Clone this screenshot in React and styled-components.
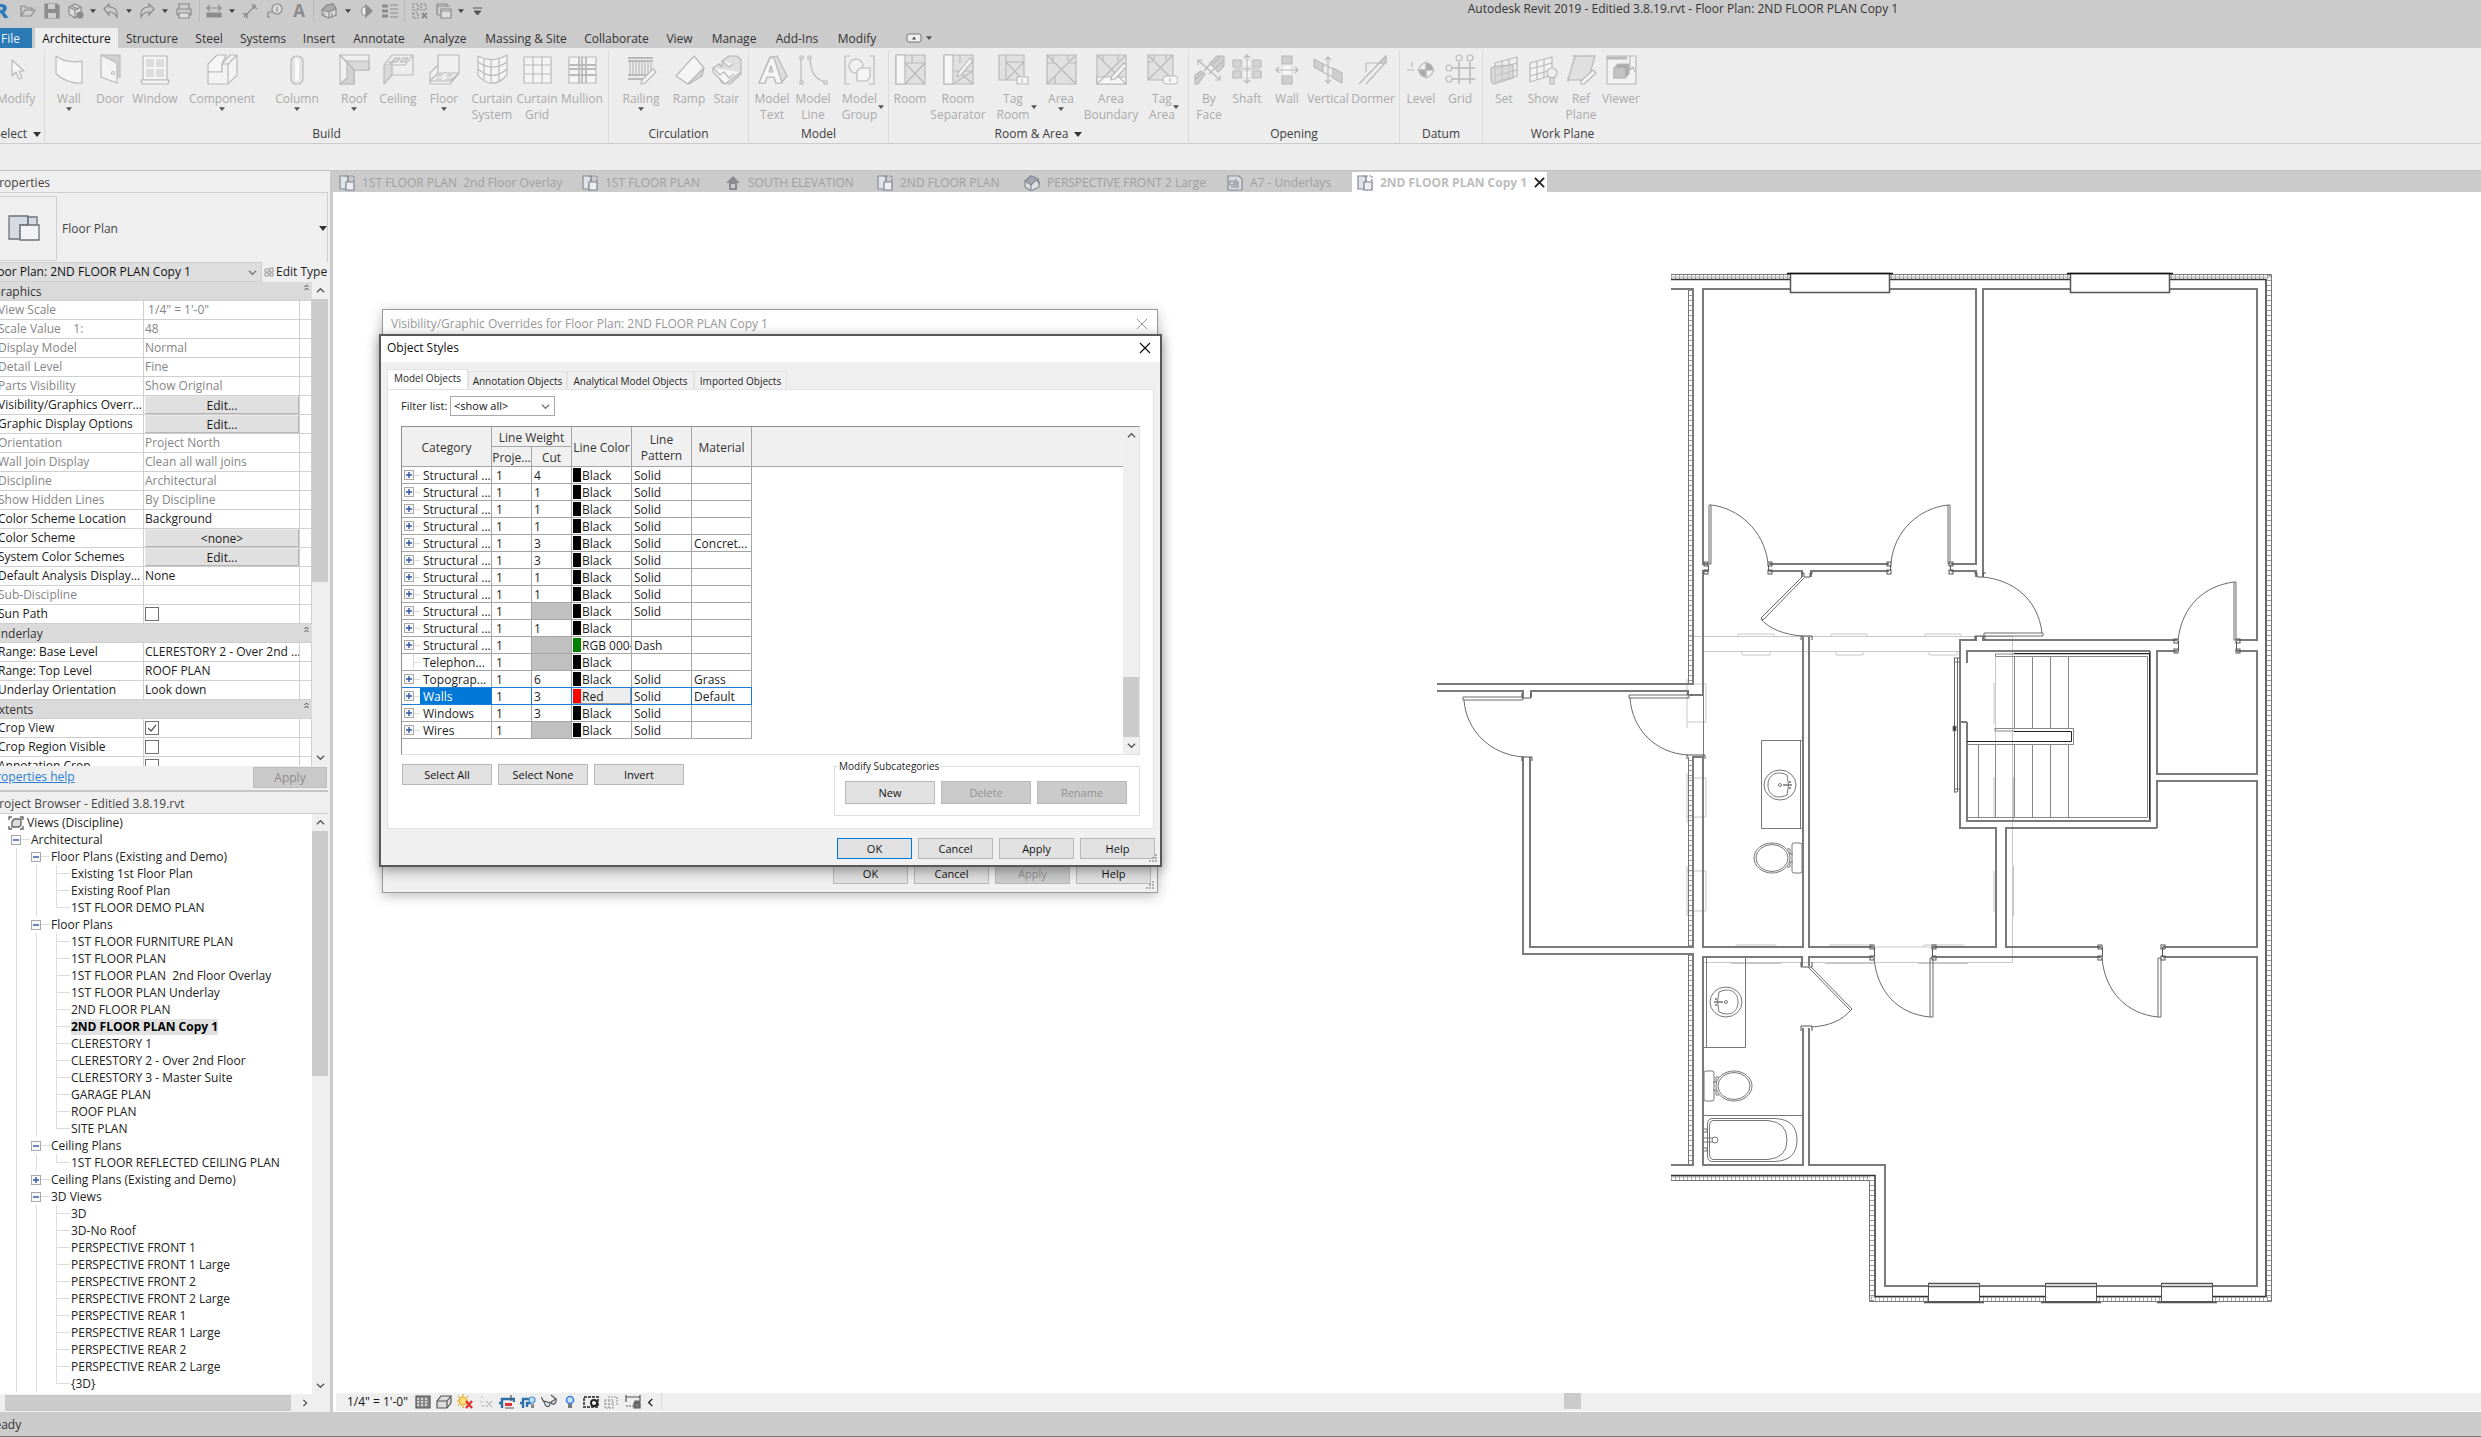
import React, { useState } from "react";
import styled, { createGlobalStyle } from "styled-components";

const GlobalStyle = createGlobalStyle`
  * { box-sizing: border-box; }
  body {
    margin: 0;
    overflow: hidden;
    font-family: "Open Sans", "Noto Sans", sans-serif;
    font-size: 12px;
    line-height: 16px;
    color: #1e1e1e;
    background: #ededed;
  }
  button, input, select { font: inherit; color: inherit; }
  svg { display: block; flex: none; }
`;

/* The left edge of the window runs off the screen */
const Shell = styled.div`
  display: flex;
  flex-direction: column;
  height: 100vh;
  margin-left: -14px;
  overflow: hidden;
`;

const TitleBar = styled.header`
  display: flex;
  align-items: flex-start;
  height: 28px;
  background: #cbcbcb;
`;

const QuickAccess = styled.div`
  display: flex;
  align-items: center;
  height: 22px;
`;

const Logo = styled.span`
  width: 22px;
  margin-right: 8px;
  text-align: right;
  font-size: 20px;
  font-weight: 800;
  color: #2f78b8;
`;

const QuickButton = styled.button`
  display: flex;
  justify-content: center;
  width: ${({ $w }) => $w}px;
  padding: 0;
  border: none;
  background: none;
  color: #8b8b8b;
  b { font-size: 17px; }
`;

const QuickDivider = styled.span`
  width: 1px;
  height: 22px;
  margin: 0 2px;
  background: #b9b9b9;
`;

const Title = styled.h1`
  flex: 1;
  margin: 0;
  padding: 1px 0 0 398px;
  text-align: center;
  font-size: 12px;
  font-weight: 400;
  color: #333;
`;

const RibbonTabs = styled.nav`
  display: flex;
  height: 20px;
  background: #cbcbcb;
  font-size: 12px;
`;

const FileTab = styled.button`
  width: 46px;
  margin-right: 3px;
  padding: 2px 0 0 15px;
  border: none;
  text-align: left;
  background: #2a7ab5;
  color: #e8f2fa;
`;

const RibbonTab = styled.button`
  width: ${({ $w }) => $w}px;
  padding: 2px 0 0;
  border: none;
  white-space: nowrap;
  background: ${({ $active }) => ($active ? "#ededed" : "transparent")};
  color: ${({ $active }) => ($active ? "#111" : "#333")};
`;

const RibbonToggle = styled.button`
  display: flex;
  align-items: center;
  gap: 4px;
  margin-left: 20px;
  padding: 0;
  border: none;
  background: none;
  color: #444;
`;

const Ribbon = styled.section`
  display: flex;
  height: 96px;
  padding-top: 2px;
  border-bottom: 1px solid #cbcbcb;
  background: #ededed;
`;

const Group = styled.div`
  display: flex;
  flex-direction: column;
  justify-content: space-between;
  width: ${({ $w }) => $w}px;
  border-right: 1px solid ${({ $last }) => ($last ? "transparent" : "#dadada")};
`;

const Tools = styled.div`
  display: flex;
  align-items: flex-start;
  padding-top: 4px;
`;

const Tool = styled.button`
  display: flex;
  flex: none;
  flex-direction: column;
  align-items: center;
  position: relative;
  width: ${({ $w }) => $w}px;
  padding: 0;
  border: none;
  background: none;
  color: #aaa;
  white-space: nowrap;
  line-height: 16px;
`;

const ToolLabel = styled.span`
  margin-top: 6px;
  text-align: center;
`;

const SideArrow = styled.span`
  position: absolute;
  right: 4px;
  bottom: 14px;
`;

const GroupLabel = styled.div`
  display: flex;
  align-items: center;
  justify-content: ${({ $start }) => ($start ? "flex-start" : "center")};
  gap: 6px;
  height: 18px;
  padding-left: ${({ $start }) => ($start ? 8 : 0)}px;
  color: #3c3c3c;
`;

const OptionsBar = styled.div`
  height: 27px;
  border-bottom: 1px solid #c3c3c3;
  background: #ededed;
`;

const Workspace = styled.div`
  display: flex;
  flex: 1;
  min-height: 0;
`;

const Sidebar = styled.aside`
  display: flex;
  flex-direction: column;
  width: 347px;
  border-right: 3px solid #cbcbcb;
  padding-right: 2px;
  background: #efefef;
`;

const PanelTitle = styled.h2`
  height: 22px;
  margin: 0;
  padding: 4px 0 0 6px;
  border-bottom: 1px solid #cfcfcf;
  font-size: 12px;
  font-weight: 400;
  color: #444;
`;

const TypeSelector = styled.button`
  display: flex;
  align-items: center;
  width: 100%;
  height: 69px;
  padding: 4px 0 2px;
  border: none;
  border-right: 1px solid #cfcfcf;
  background: none;
  color: #444;
  text-align: left;
`;

const Thumb = styled.span`
  display: flex;
  align-items: center;
  width: 71px;
  height: 65px;
  margin-right: 5px;
  padding-left: 21px;
  border: 1px solid #d0d0d0;
`;

const Grow = styled.span`
  flex: 1;
`;

const InstanceRow = styled.div`
  display: flex;
  height: 20px;
`;

const SelectWrap = styled.span`
  position: relative;
  display: block;
  width: ${({ $w }) => $w}px;
  color: #111;
  svg {
    position: absolute;
    right: 5px;
    top: 6px;
    color: #777;
    pointer-events: none;
  }
`;

const Select = styled.select`
  width: 100%;
  height: 20px;
  padding: 0 0 0 ${({ $pad }) => $pad}px;
  border: 1px solid ${({ $edge }) => $edge};
  border-radius: 0;
  appearance: none;
  background: ${({ $bg }) => $bg};
`;

const EditType = styled.button`
  display: flex;
  align-items: center;
  gap: 2px;
  flex: 1;
  padding: 0 0 0 2px;
  border: none;
  background: none;
  white-space: nowrap;
`;

const PropertyArea = styled.div`
  display: flex;
  height: 484px;
`;

const PropertyClip = styled.div`
  flex: 1;
  overflow: hidden;
  background: #fff;
`;

const PropertyTable = styled.table`
  width: 100%;
  table-layout: fixed;
  border-spacing: 0;
  td, th {
    height: 19px;
    padding: 1px 0 0 1px;
    border-right: 1px solid #cfcfcf;
    border-bottom: 1px solid #cfcfcf;
    font-weight: 400;
    text-align: left;
    white-space: pre;
    overflow: hidden;
  }
  td { padding-top: 0; }
  td:first-child { padding-left: 12px; text-overflow: ellipsis; }
  th {
    position: relative;
    padding-left: 6px;
    background: #dadada;
    color: #333;
    border-right: none;
  }
  th svg { position: absolute; right: 3px; top: 2px; }
`;

const Col = styled.col`
  width: ${({ $w }) => $w}px;
`;

const PropertyRow = styled.tr`
  color: ${({ $dim }) => ($dim ? "#858585" : "#1a1a1a")};
`;

const CellButton = styled.button`
  display: block;
  width: 100%;
  height: 18px;
  padding: 1px 0 0;
  border: 1px solid #b4b4b4;
  border-top-color: #e8e8e8;
  border-left-color: #e8e8e8;
  background: #e0e0e0;
  line-height: 15px;
`;

const CheckBox = styled.input`
  display: block;
  appearance: none;
  width: 14px;
  height: 14px;
  margin: 0;
  border: 1px solid #707070;
  background: #fff;
`;

const CheckHolder = styled.span`
  position: relative;
  display: block;
  width: 14px;
  svg { position: absolute; left: 2px; top: 3px; pointer-events: none; }
`;

const PropertiesFooter = styled.div`
  display: flex;
  justify-content: space-between;
  height: 26px;
  padding: 1px 1px 3px 3px;
  border-bottom: 2px solid #c6c6c6;
  a { padding-top: 2px; color: #2a7fd0; }
`;

const FooterApply = styled.button`
  width: 74px;
  height: 21px;
  padding: 0;
  border: 1px solid #bdbdbd;
  background: #c9c9c9;
  color: #8c8c8c;
`;

const BarTrack = styled.div`
  display: flex;
  flex-direction: column;
  justify-content: space-between;
  flex: none;
  width: 16px;
  background: #efefef;
  color: #555;
  button {
    display: flex;
    justify-content: center;
    align-items: center;
    width: 16px;
    height: 17px;
    padding: 0;
    border: none;
    background: none;
    color: inherit;
  }
`;

const BarThumb = styled.div`
  height: ${({ $h }) => $h}px;
  margin-bottom: ${({ $below }) => ($below ? "0" : "auto")};
  margin-top: ${({ $below }) => ($below ? "auto" : "0")};
  background: #cbcbcb;
`;

const BrowserArea = styled.div`
  display: flex;
  flex: 1;
  min-height: 0;
`;

const Tree = styled.ul`
  flex: 1;
  margin: 0;
  padding: 0;
  overflow: hidden;
  list-style: none;
  background: #fff;
`;

const TreeRow = styled.li`
  display: flex;
  align-items: center;
  height: 17px;
  white-space: pre;
  color: #222;
`;

const Guide = styled.span`
  width: ${({ $narrow }) => ($narrow ? 11 : 20)}px;
  height: ${({ $half }) => ($half ? 9 : 17)}px;
  align-self: flex-start;
  background: ${({ $blank }) => ($blank ? "none" : "linear-gradient(#dcdcdc, #dcdcdc) 10px 0 / 1px 100% no-repeat")};
`;

const Dash = styled.span`
  flex: none;
  width: ${({ $w }) => $w}px;
  height: 1px;
  margin-left: ${({ $back }) => -$back}px;
  background: #dcdcdc;
`;

const Toggle = styled.button`
  display: flex;
  flex: none;
  align-items: center;
  justify-content: center;
  width: 10px;
  height: 10px;
  margin: 0 5px;
  padding: 0;
  border: 1px solid #a9a9a9;
  background: #f8f8f8;
  color: #3355a8;
`;

const TreeText = styled.span`
  margin-left: 1px;
  background: ${({ $active }) => ($active ? "#e2e2e2" : "none")};
  color: ${({ $active }) => ($active ? "#000" : "inherit")};
  font-weight: ${({ $active }) => ($active ? 700 : 400)};
`;

const BottomScroll = styled.div`
  display: flex;
  align-items: center;
  height: 17px;
  margin-bottom: 1px;
  padding-left: 19px;
  color: #444;
`;

const BottomThumb = styled.div`
  width: 286px;
  height: 16px;
  margin-right: 10px;
  background: #cbcbcb;
`;

const Editor = styled.main`
  display: flex;
  flex-direction: column;
  flex: 1;
  min-width: 0;
  background: #fff;
`;

const DocTabs = styled.nav`
  display: flex;
  height: 21px;
  padding: 1px 0 0 1px;
  background: #cbcbcb;
`;

const DocTab = styled.button`
  display: flex;
  align-items: center;
  gap: 7px;
  width: ${({ $w }) => $w}px;
  padding: 1px 5px 0;
  border: none;
  white-space: pre;
  background: ${({ $active }) => ($active ? "#fff" : "transparent")};
  color: ${({ $active }) => ($active ? "#bdbdbd" : "#a0a0a0")};
  font-weight: ${({ $active }) => ($active ? 700 : 400)};
`;

const CloseMark = styled.span`
  color: #222;
`;

const Canvas = styled.div`
  position: relative;
  display: flex;
  justify-content: flex-end;
  flex: 1;
  min-height: 0;
  padding: 68px 191px 0 0;
`;

const ViewBar = styled.footer`
  display: flex;
  align-items: center;
  height: 18px;
  margin: 0 0 1px 3px;
  padding-left: 11px;
  background: #efefef;
  color: #111;
`;

const ViewScale = styled.span`
  width: 68px;
  white-space: nowrap;
`;

const ViewButton = styled.button`
  display: flex;
  width: 21px;
  padding: 0;
  border: none;
  background: none;
`;

const HTrack = styled.div`
  flex: 1;
  height: 18px;
  margin-left: 6px;
  padding-left: 42%;
  border-left: 1px solid #ddd;
`;

const HThumb = styled.div`
  width: 17px;
  height: 16px;
  margin-left: 6px;
  background: #cbcbcb;
`;

const StatusBar = styled.footer`
  height: 25px;
  padding: 5px 0 0 1px;
  border-bottom: 1px solid #777;
  background: #cbcbcb;
  color: #333;
`;

const DialogBox = styled.div`
  position: absolute;
  display: flex;
  flex-direction: column;
  left: ${({ $front }) => ($front ? 46 : 49)}px;
  top: ${({ $front }) => ($front ? 142 : 117)}px;
  width: ${({ $front }) => ($front ? 783 : 776)}px;
  height: ${({ $front }) => ($front ? 533 : 584)}px;
  border: ${({ $front }) => ($front ? "2px solid #585858" : "1px solid #999")};
  background: #f0f0f0;
  box-shadow: 0 3px 12px rgba(0, 0, 0, ${({ $front }) => ($front ? 0.4 : 0.25)});
`;

const DialogTitle = styled.div`
  display: flex;
  align-items: center;
  justify-content: space-between;
  height: ${({ $dim }) => ($dim ? 28 : 26)}px;
  padding: 0 9px ${({ $dim }) => ($dim ? "0 8px" : "2px 6px")};
  background: #fff;
  color: ${({ $dim }) => ($dim ? "#999" : "#111")};
  button {
    padding: 0;
    border: none;
    background: none;
    color: inherit;
  }
`;

const DialogTabs = styled.div`
  display: flex;
  align-items: flex-end;
  height: 27px;
  padding-left: 6px;
  font-size: 10px;
`;

const DialogTab = styled.button`
  width: ${({ $w }) => $w}px;
  height: ${({ $active }) => ($active ? 20 : 18)}px;
  padding: 0 0 ${({ $active }) => ($active ? 3 : 0)}px;
  border: 1px solid #e2e2e2;
  border-bottom: none;
  white-space: nowrap;
  background: ${({ $active }) => ($active ? "#fff" : "#f0f0f0")};
`;

const DialogPanel = styled.div`
  height: 440px;
  margin: 0 6px;
  padding: 6px 13px;
  border: 1px solid #e2e2e2;
  background: #fff;
`;

const FilterRow = styled.div`
  display: flex;
  align-items: center;
  margin-bottom: 10px;
  font-size: 11px;
  label { width: 49px; }
`;

const TableBox = styled.div`
  display: flex;
  height: 329px;
  border: 1px solid #8f8f8f;
  border-right-color: #e2e2e2;
  border-bottom-color: #e2e2e2;
`;

const TableArea = styled.div`
  flex: 1;
  background:
    linear-gradient(#a5a5a5, #a5a5a5) 0 39px / 100% 1px no-repeat,
    linear-gradient(#f0f0f0, #f0f0f0) 0 0 / 100% 39px no-repeat;
`;

const StyleTable = styled.table`
  width: 350px;
  table-layout: fixed;
  border-spacing: 0;
  th, td {
    border-right: 1px solid #a5a5a5;
    border-bottom: 1px solid #a5a5a5;
    font-weight: 400;
    white-space: nowrap;
    overflow: hidden;
  }
  th { height: 20px; padding: 2px 0 0; text-align: center; color: #333; }
  td { height: 17px; padding: 1px 0 0 2px; line-height: 15px; }
  td:nth-child(2) { padding-left: 4px; }
  td:nth-child(1), td:nth-child(4) { padding: 0 0 0 1px; }
`;

const StyleRow = styled.tr`
  td {
    ${({ $selected }) => $selected && "border-bottom-color: #1b7fd6; border-right-color: #1b7fd6; box-shadow: 0 -1px 0 #1b7fd6;"}
  }
`;

const CategoryCell = styled.div`
  display: flex;
  align-items: center;
  height: 16px;
  line-height: 18px;
  button { margin: 0 0 0 1px; }
`;

const CategoryText = styled.span`
  flex: 1;
  height: 16px;
  padding-left: 3px;
  background: ${({ $selected }) => ($selected ? "#0078d7" : "none")};
  color: ${({ $selected }) => ($selected ? "#fff" : "inherit")};
`;

const CutCell = styled.td`
  background: ${({ $off }) => ($off ? "#c0c0c0" : "none")};
`;

const ColorCell = styled.div`
  display: flex;
  gap: 1px;
  height: 16px;
  line-height: 18px;
  background: ${({ $selected }) => ($selected ? "#ededed" : "none")};
  box-shadow: ${({ $selected }) => ($selected ? "inset -1px -1px 0 #999" : "none")};
`;

const Swatch = styled.span`
  flex: none;
  width: 8px;
  height: 14px;
  margin-top: 1px;
  background: ${({ $color }) => $color};
`;

const PanelBottom = styled.div`
  display: flex;
  justify-content: space-between;
  margin-top: 9px;
  padding-left: 1px;
  font-size: 11px;
`;

const ButtonRow = styled.div`
  display: flex;
  gap: 6px;
`;

const PushButton = styled.button`
  width: ${({ $w }) => $w}px;
  height: ${({ $h }) => $h || 21}px;
  padding: 0;
  border: 1px solid ${({ $primary }) => ($primary ? "#0078d7" : "#b8b8b8")};
  background: ${({ disabled }) => (disabled ? "#cbcbcb" : "#e1e1e1")};
  color: ${({ disabled }) => (disabled ? "#929292" : "#111")};
  line-height: 16px;
`;

const Subcategories = styled.fieldset`
  width: 306px;
  height: 58px;
  margin: -6px 0 0;
  padding: 7px 0 0 10px;
  border: 1px solid #dedede;
  legend {
    margin-left: -7px;
    padding: 0 1px;
    font-size: 10px;
  }
`;

const DialogFooter = styled.div`
  display: flex;
  justify-content: flex-end;
  gap: 6px;
  margin-top: ${({ $end }) => ($end ? "auto" : "9px")};
  padding: 0 ${({ $end }) => ($end ? "6px 8px" : "5px 0")} 0;
  font-size: 11px;
`;

const Grip = styled.span`
  position: absolute;
  right: 2px;
  bottom: 2px;
  color: #b0b0b0;
`;

/* ---------- small glyphs ---------- */

const Caret = ({ size = 6, color = "#555" }) => (
  <svg width={size} height={size / 2 + 1} viewBox="0 0 8 5"><path d="M0 0h8L4 5z" fill={color} /></svg>
);

const Chevron = ({ dir = "down", size = 9 }) => {
  const d = { down: "M1 3l4 4 4-4", up: "M1 7l4-4 4 4", left: "M7 1L3 5l4 4", right: "M3 1l4 4-4 4" }[dir];
  return <svg width={size} height={size} viewBox="0 0 10 10"><path d={d} fill="none" stroke="currentColor" strokeWidth="1.4" /></svg>;
};

const Cross = ({ size = 12, w = 1 }) => (
  <svg width={size} height={size} viewBox="0 0 12 12"><path d="M1 1l10 10M11 1L1 11" stroke="currentColor" strokeWidth={w} fill="none" /></svg>
);

const PlusMinus = ({ plus }) => (
  <svg width="6" height="6" viewBox="0 0 6 6"><path d={plus ? "M0 3h6M3 0v6" : "M0 3h6"} stroke="currentColor" strokeWidth="1.4" /></svg>
);

const DoubleUp = () => (
  <svg width="5" height="7" viewBox="0 0 5 7"><path d="M.5 3l2-2 2 2M.5 6l2-2 2 2" fill="none" stroke="#444" /></svg>
);

const GripDots = () => (
  <svg width="9" height="9" viewBox="0 0 9 9" fill="currentColor">
    <path d="M6 0h2v2H6zM3 3h2v2H3zM6 3h2v2H6zM0 6h2v2H0zM3 6h2v2H3zM6 6h2v2H6z" />
  </svg>
);

const quickIcons = {
  open: <path d="M1 13V3h4l1 2h6v3M1 13l4-6h10l-4 6z" />,
  save: <><path d="M1 1h12l2 2v12H1z" fill="currentColor" /><path d="M4 1h7v5H4zM4 10h8v5H4z" fill="#ccc" stroke="none" /></>,
  sync: <><path d="M1 4l6-3 6 3v7l-6 4-6-4zM1 4l6 3 6-3M7 7v8M4 3l6 3" fill="#ddd" /><circle cx="12" cy="12" r="3" fill="currentColor" /></>,
  undo: <path d="M1 6l5-5v3c6 0 9 3 8 10-2-4-4-5-8-5v3z" />,
  redo: <path d="M15 6l-5-5v3C4 4 1 7 2 14c2-4 4-5 8-5v3z" />,
  print: <><path d="M3 6V1h10v5M1 6h14v6H1z" /><path d="M3 10h10v5H3z" fill="#ddd" /></>,
  measure: <><path d="M1 10h14v4H1z" fill="currentColor" /><path d="M1 5h14M4 2L1 5l3 3M12 2l3 3-3 3" /></>,
  dimension: <path d="M2 14L14 2M1 10l5 5M10 1l5 5M4 10v2h2M12 6V4h-2" />,
  tag: <><circle cx="10" cy="6" r="5" fill="#ddd" /><path d="M10 3.5V9M1 9h4M1 9v5M0 14h3" /></>,
  house: <><path d="M1 7l5-5 6-1 3 5v6l-7 3-7-3z" fill="#ddd" /><path d="M1 7l5-5 6-1 3 5-7 3zM8 9v6M3 9v3M11 10v4" fill="#aaa" /></>,
  section: <><path d="M8 1v14" /><circle cx="8" cy="8" r="4.5" fill="#eee" /><path d="M8 3l6 5-6 5z" fill="currentColor" /></>,
  lines: <><path d="M0 3h6M0 8h6M0 13h6" strokeWidth="3" /><path d="M8 2h8M8 6h8M8 10h8M8 14h8" /></>,
  closeHidden: <><path d="M1 1h5v6H1zM9 1h5v6H9zM1 10h5v5H1z" strokeDasharray="2 1" /><path d="M10 10l5 5M15 10l-5 5" strokeWidth="2" /></>,
  switch: <><path d="M1 12V1h10v3M1 3h10" /><path d="M5 6h10v9H5z" fill="#ddd" /><path d="M5 8h10M1 12h3M14 3h-2" /></>,
};

const QuickIcon = ({ name }) => (
  <svg width="16" height="16" viewBox="0 0 16 16" fill="none" stroke="currentColor" strokeWidth="1.2">{quickIcons[name]}</svg>
);

const box = <path d="M1 1h29v29H1z" fill="#e0e0e0" />;
const pencil = <path d="M15 19L27 4l3 3-12 14-4 2z" fill="#f4f4f4" />;

const toolIcons = {
  modify: <path d="M11 6v16l4-4 3 7 3-1-3-7h5z" fill="#f7f7f7" />,
  wall: <path d="M2 2c8 6 16 7 26 5v22C16 30 8 25 2 20z" fill="#f5f5f5" />,
  door: <><path d="M6 1h19v22h-4" fill="#d0d0d0" /><path d="M6 1l16 8v20L6 23z" fill="#f3f3f3" /><circle cx="18" cy="19" r="1.5" /></>,
  window: <><path d="M3 2h24v24H3z" fill="#f3f3f3" /><path d="M6 5h8v8H6zM16 5h8v8h-8zM6 15h8v8H6zM16 15h8v8h-8z" fill="#dcdcdc" stroke="none" /><path d="M1 26h28l-1 4H2z" fill="#f3f3f3" /></>,
  component: <><path d="M1 10l9-9h9l-4 9v8H1z" fill="#f6f6f6" /><path d="M1 18v12h20l9-9V1h-7l-8 9v8z" fill="#f3f3f3" /><path d="M21 10l9-9M21 10v20M15 10h6" /></>,
  column: <><rect x="9" y="2" width="12" height="28" rx="5" fill="#e4e4e4" /><path d="M13 5h4v22h-4z" fill="#fafafa" stroke="none" /></>,
  roof: <><path d="M1 1h29v15H15v14H1z" fill="#f0f0f0" /><path d="M1 1l6 6h23v9H15z" fill="#dadada" /><path d="M8 8v16l-7 6h14V16z" fill="#d2d2d2" /></>,
  ceiling: <><path d="M1 11l8-10h21v20H9" /><path d="M1 11h21l8-10" /><path d="M1 11v19l8-9V11M5 8h5l-3 3M12 4h5l-3 4h-5zM20 4h5l-3 4h-5z" fill="#d8d8d8" /></>,
  floor: <><path d="M1 19l8-8V1h21v18l-9 11H1z" fill="#f0f0f0" /><path d="M9 11v8h21M1 27h20l9-8M9 19l-8 8" /><path d="M9 20h6l-3 3H6zM19 20h6l-3 3h-6zM8 24h6l-3 3H5zM18 24h5l-3 3h-6z" fill="#d4d4d4" stroke="none" /></>,
  curtainSystem: <><path d="M1 2c10 5 18 5 29-1v20c-6 7-12 9-18 8C7 27 3 24 1 21z" fill="#f4f4f4" /><path d="M1 8c10 7 19 7 29 0M1 15c9 8 19 9 29 0M7 5v21M14 6v23M22 5v23" /></>,
  curtainGrid: <><path d="M2 3h27v26H2z" fill="#f4f4f4" /><path d="M2 11h27M2 20h27M11 3v26M20 3v26" /></>,
  mullion: <><path d="M2 3h27v26H2z" fill="#f4f4f4" /><path d="M2 11h27M2 15h27M2 21h27M12 3v26M15 3v26M19 3v26" strokeWidth="1.8" /></>,
  railing: <><path d="M2 4h25M2 7h25M2 21h25M2 25h18" strokeWidth="2" /><path d="M4 7v14M7 7v14M10 7v14M13 7v14M16 7v14M19 7v14M22 7v14M25 7v14" /><path d="M16 26l11-11 3 3-11 11-4 1z" fill="#f3f3f3" /></>,
  ramp: <><path d="M2 22L20 2l10 12-16 16z" fill="#f5f5f5" /><path d="M14 30l16-16-2 8-13 8z" fill="#d5d5d5" /></>,
  stair: <><path d="M2 14l6-4 3 3V7l7-5h8l4 4v14L19 30l-8-1z" fill="#dedede" /><path d="M2 14l7 7 4-3 5 6 5-4M11 7l7 6 4-3M2 14v4l12 12 16-12" fill="#f5f5f5" /></>,
  modelText: <><path d="M2 29L13 3l7-1 10 20-6 7h-5l-2-6h-7l-2 6z" fill="#dedede" /><path d="M2 29L13 4h4l8 25h-6l-2-6h-7l-2 6zM12 18h4l-2-6z" fill="#f5f5f5" /></>,
  modelLine: <><path d="M3 3v25M12 3c0 15 5 23 16 25" /><path d="M2 2h3v3H2zM2 27h3v3H2zM10 2h3v3h-3zM26 27h3v3h-3z" fill="#eee" /></>,
  modelGroup: <><path d="M6 2H1v28h5M25 2h5v28h-5" /><circle cx="12" cy="12" r="7" fill="#f0f0f0" /><path d="M13 17l3-3h10v9l-3 4H13z" fill="#f5f5f5" /></>,
  room: <>{box}<path d="M1 1h9v29H1z" fill="#f5f5f5" /><path d="M10 9h20M10 9l20 21M30 9L10 30M17 1v8" /></>,
  roomSeparator: <>{box}<path d="M1 1h9v29H1z" fill="#f5f5f5" /><path d="M10 17h20M17 1v8M10 30l20-13M15 17l15 13" />{pencil}</>,
  tagRoom: <><path d="M1 1h25v25H1z" fill="#e0e0e0" /><path d="M8 1v25M8 8h18M8 8l17 18M26 8L8 26" /><path d="M19 23h11v7H19z" fill="#f6f6f6" /><path d="M24 25v4" /></>,
  area: <>{box}<path d="M1 1l29 29M30 1L1 30M7 1v6M1 9h8M22 1v6M24 9h6M9 30v-7" /></>,
  areaBoundary: <>{box}<path d="M1 23h29v7H1z" fill="#f6f6f6" /><path d="M1 1l29 29M30 1L1 30M7 1v6M22 1v6" /><path d="M16 22L28 9l3 3-12 13-4 1z" fill="#f4f4f4" /></>,
  tagArea: <><path d="M1 1h25v25H1z" fill="#e0e0e0" /><path d="M1 1l25 25M26 1L1 26M7 1v5M19 1v5M1 8h5" /><rect x="16" y="22" width="15" height="8" rx="4" fill="#f6f6f6" /><path d="M23 24v4" /></>,
  byFace: <><path d="M1 30v-9l6-4 4 3-7 10zM16 9l7-7h7v10l-6 6z" fill="#d0d0d0" /><path d="M4 6l22 20M4 11V6h5M26 21v5h-5M10 17l6-7M15 20l5-5M1 26l7-7M19 10l8-8M22 14l8-8" /></>,
  shaft: <><path d="M1 6h8v7H1zM21 6h8v7h-8zM1 17h8v7H1zM21 17h8v7h-8z" fill="#d4d4d4" /><path d="M11 6h8v7h-8zM11 17h8v7h-8z" fill="#f6f6f6" stroke="#ddd" /><path d="M15 1v28M12 4l3-3 3 3M12 26l3 3 3-3M2 15h26" /></>,
  wallOpening: <><path d="M10 2h10v8H10zM10 22h10v8H10z" fill="#cfcfcf" /><path d="M10 11h10v10H10z" fill="#f7f7f7" stroke="#ddd" /><path d="M4 16h22M7 13l-3 3 3 3M23 13l3 3-3 3" /></>,
  vertical: <><path d="M1 5l9 5v8l-9-5zM20 14l9 5v10l-9-5z" fill="#cfcfcf" /><path d="M10 10l10 5M10 18l10 5M15 3v26M12 6l3-3 3 3M12 26l3 3 3-3" /></>,
  dormer: <><path d="M1 30L28 2v6L8 30M8 18V9h20" /><path d="M21 9l7-7v7z" fill="#cfcfcf" /></>,
  level: <><circle cx="20" cy="16" r="7" fill="#f0f0f0" /><path d="M20 9a7 7 0 0 1 7 7h-7zM20 23a7 7 0 0 1-7-7h7z" fill="#aaa" /><path d="M20 7v18M11 16h18M1 16h7M6 9v4M6 8v1" /></>,
  grid: <><path d="M14 8v22M25 8v22M7 14h23M7 25h23" strokeWidth="1.6" /><circle cx="14" cy="4" r="3" /><circle cx="25" cy="4" r="3" /><circle cx="4" cy="14" r="3" /><circle cx="4" cy="25" r="3" /></>,
  set: <><path d="M6 9l22-6v19L6 28z" fill="#eee" /><path d="M13 7v19M20 5v19M6 15l22-6M6 22l22-6" /><path d="M2 14l4-2 18-1v13L5 30l-3-3z" fill="#ccc" fillOpacity=".6" /></>,
  show: <><path d="M2 9l22-6v18L2 28z" fill="#f2f2f2" /><path d="M9 7v19M16 5v19M2 15l22-6M2 22l22-6" /><circle cx="24" cy="19" r="5" fill="#eee" /><path d="M22 24h4v6h-4z" fill="#ddd" /></>,
  refPlane: <><path d="M9 2h20l-7 24H2z" fill="#e0e0e0" /><path d="M6 2h24M9 1v4M2 23v6" strokeDasharray="2 1" /><path d="M15 27l12-11 3 3-12 11h-3z" fill="#f5f5f5" /></>,
  viewer: <><path d="M1 2h29v28H1z" fill="#f2f2f2" /><path d="M1 4h20" strokeWidth="3" /><path d="M8 14l4-4h11v10l-4 4H8z" fill="#aaa" /><path d="M8 14h11v10H8z" fill="#c4c4c4" /><path d="M24 2v14l3-3 2 5" fill="#f5f5f5" /></>,
};

const ToolIcon = ({ name }) => (
  <svg width="31" height="31" viewBox="0 0 31 31" fill="none" stroke="#b9b9b9" strokeWidth="1.2" strokeLinejoin="round">{toolIcons[name]}</svg>
);

const docIcons = {
  plan: <><path d="M1 1h8v13H1z" fill="#dfe3ea" /><path d="M6 1h9v14H7v-8h8M9 1v6" strokeDasharray="2 1" /><path d="M7 7h8v8H7z" fill="#eceef2" /></>,
  elevation: <path d="M8 1l7 7h-3v7H4V8H1zM6 9h4v4H6z" fill="#8a8c92" fillRule="evenodd" stroke="none" />,
  perspective: <><path d="M1 6l6-5 7 3 1 4v4l-8 4-6-4z" fill="#dcdfe5" /><path d="M1 6l6-5 7 3 1 4-3-3-5 5z" fill="#a4a8b0" /><path d="M7 15V9" /></>,
  sheet: <><path d="M1 1h11l3 3v11H1z" fill="#d8dbe0" /><path d="M3 6h4v4H3zM9 4v8H4M11 6v7" /></>,
};

const DocIcon = ({ name }) => (
  <svg width="16" height="16" viewBox="0 0 16 16" fill="none" stroke="#868b94" strokeWidth="1.2">{docIcons[name]}</svg>
);

const viewIcons = [
  <><path d="M1 2h14v12H1z" fill="#888" /><path d="M2 5h12M2 8h12M2 11h12" stroke="#eee" strokeWidth="1.5" strokeDasharray="2 2" /></>,
  <><path d="M1 7l4-5h10v7l-4 5H1z" fill="#ddd" /><path d="M1 7h10v7M11 7l4-5" /></>,
  <><circle cx="6" cy="7" r="4" fill="#ffe07a" stroke="#e0a020" /><path d="M6 0v2M6 12v2M0 7h1M1 2l1 1M11 2l-1 1M1 12l1-1" stroke="#e0a020" /><path d="M9 7l6 7M15 7l-6 7" stroke="#d33" strokeWidth="2.4" /></>,
  <path d="M3 3h2M2 8h3M3 12h4M8 7l6 6M14 7l-6 6" stroke="#bbb" />,
  <><path d="M3 14V5h12v3M0 9h3" stroke="#2d6fa8" strokeWidth="2.4" /><path d="M6 9h7v3H6z" fill="#d33" stroke="none" /><path d="M12 1v6M6 14h9" /></>,
  <><path d="M3 14V5h8M0 9h3M7 13V9h4" stroke="#2d6fa8" strokeWidth="2.4" /><circle cx="12" cy="6" r="3" fill="#bfe0ff" stroke="#4b8fd0" /><path d="M11 10h3v4h-3z" fill="#888" stroke="none" /></>,
  <><path d="M0 3l3 5M10 1l5 4" /><path d="M3 7l6 2c0 5-5 5-6-2zM10 8l5-3c1 5-4 7-5 3z" fill="#cde6f2" /></>,
  <><circle cx="8" cy="6" r="3.5" fill="#cbe5ff" stroke="#3b82d6" strokeWidth="1.6" /><path d="M6 10h4v4H6z" fill="#777" stroke="none" /></>,
  <><path d="M1 3h14v10H1z" strokeWidth="2" strokeDasharray="3 1" /><circle cx="11" cy="9" r="3" fill="#fff" stroke="#222" strokeWidth="2" /></>,
  <path d="M1 6h8v8H1zM1 10h8M5 6v8M4 3h9v8" stroke="#999" strokeDasharray="2 1" />,
  <><path d="M1 1v7M15 1v7M1 3h14" /><path d="M9 9h6v5H9zM10 9V7h4v2" fill="#777" /><path d="M1 12h7" strokeDasharray="2 1" /></>,
];

const ViewIcon = ({ art }) => (
  <svg width="16" height="16" viewBox="0 0 16 16" fill="none" stroke="#555" strokeWidth="1.2">{art}</svg>
);

/* ---------- data ---------- */

const ribbonTabs = [
  ["Structure", 68], ["Steel", 46], ["Systems", 62], ["Insert", 50], ["Annotate", 70], ["Analyze", 62],
  ["Massing & Site", 100], ["Collaborate", 81], ["View", 45], ["Manage", 64], ["Add-Ins", 62], ["Modify", 58],
];

// tool: label, icon, width, arrow position
const ribbonGroups = [
  { label: "Select", w: 59, arrow: true, start: true, tools: [["Modify", "modify", 60]] },
  {
    label: "Build", w: 564,
    tools: [
      ["Wall", "wall", 48, "below"], ["Door", "door", 34], ["Window", "window", 56], ["Component", "component", 78, "below"],
      ["Column", "column", 72, "below"], ["Roof", "roof", 42, "below"], ["Ceiling", "ceiling", 46], ["Floor", "floor", 46, "below"],
      ["Curtain\nSystem", "curtainSystem", 50], ["Curtain\nGrid", "curtainGrid", 40], ["Mullion", "mullion", 50],
    ],
  },
  { label: "Circulation", w: 140, tools: [["Railing", "railing", 64, "below"], ["Ramp", "ramp", 32], ["Stair", "stair", 43]] },
  { label: "Model", w: 140, tools: [["Model\nText", "modelText", 46], ["Model\nLine", "modelLine", 36], ["Model\nGroup", "modelGroup", 57, "side"]] },
  {
    label: "Room & Area", w: 300, arrow: true,
    tools: [
      ["Room", "room", 42], ["Room\nSeparator", "roomSeparator", 54], ["Tag\nRoom", "tagRoom", 56, "side"],
      ["Area", "area", 40, "below"], ["Area\nBoundary", "areaBoundary", 60], ["Tag\nArea", "tagArea", 42, "side"],
    ],
  },
  {
    label: "Opening", w: 211,
    tools: [["By\nFace", "byFace", 40], ["Shaft", "shaft", 36], ["Wall", "wallOpening", 44], ["Vertical", "vertical", 38], ["Dormer", "dormer", 52]],
  },
  { label: "Datum", w: 83, tools: [["Level", "level", 42], ["Grid", "grid", 36]] },
  { label: "Work Plane", w: 160, last: true, tools: [["Set", "set", 42], ["Show", "show", 36], ["Ref\nPlane", "refPlane", 40], ["Viewer", "viewer", 40]] },
];

const quickAccess = [
  ["open", 24], ["save", 24], ["sync", 23], ["caret", 12], ["undo", 24], ["caret", 12], ["redo", 24], ["caret", 12],
  ["print", 26], ["|"], ["measure", 24], ["caret", 12], ["dimension", 24], ["tag", 25], ["A", 24], ["|"],
  ["house", 26], ["caret", 12], ["section", 24], ["lines", 24], ["|"], ["closeHidden", 26], ["switch", 22], ["caret", 12],
];

const docTabs = [
  ["1ST FLOOR PLAN  2nd Floor Overlay", "plan", 243], ["1ST FLOOR PLAN", "plan", 143], ["SOUTH ELEVATION", "elevation", 152],
  ["2ND FLOOR PLAN", "plan", 147], ["PERSPECTIVE FRONT 2 Large", "perspective", 203], ["A7 - Underlays", "sheet", 130],
];

const properties = [
  { group: "Graphics" },
  { name: "View Scale", value: " 1/4\" = 1'-0\"", dim: true },
  { name: "Scale Value    1:", value: "48", dim: true },
  { name: "Display Model", value: "Normal", dim: true },
  { name: "Detail Level", value: "Fine", dim: true },
  { name: "Parts Visibility", value: "Show Original", dim: true },
  { name: "Visibility/Graphics Overrid...", button: "Edit..." },
  { name: "Graphic Display Options", button: "Edit..." },
  { name: "Orientation", value: "Project North", dim: true },
  { name: "Wall Join Display", value: "Clean all wall joins", dim: true },
  { name: "Discipline", value: "Architectural", dim: true },
  { name: "Show Hidden Lines", value: "By Discipline", dim: true },
  { name: "Color Scheme Location", value: "Background" },
  { name: "Color Scheme", button: "<none>" },
  { name: "System Color Schemes", button: "Edit..." },
  { name: "Default Analysis Display S...", value: "None" },
  { name: "Sub-Discipline", value: "", dim: true },
  { name: "Sun Path", check: false },
  { group: "Underlay" },
  { name: "Range: Base Level", value: "CLERESTORY 2 - Over 2nd ..." },
  { name: "Range: Top Level", value: "ROOF PLAN" },
  { name: "Underlay Orientation", value: "Look down" },
  { group: "Extents" },
  { name: "Crop View", check: true },
  { name: "Crop Region Visible", check: false },
  { name: "Annotation Crop", check: false },
];

const views = [
  { name: "Floor Plans (Existing and Demo)", items: ["Existing 1st Floor Plan", "Existing Roof Plan", "1ST FLOOR DEMO PLAN"] },
  {
    name: "Floor Plans",
    items: [
      "1ST FLOOR FURNITURE PLAN", "1ST FLOOR PLAN", "1ST FLOOR PLAN  2nd Floor Overlay", "1ST FLOOR PLAN Underlay",
      "2ND FLOOR PLAN", "2ND FLOOR PLAN Copy 1", "CLERESTORY 1", "CLERESTORY 2 - Over 2nd Floor",
      "CLERESTORY 3 - Master Suite", "GARAGE PLAN", "ROOF PLAN", "SITE PLAN",
    ],
  },
  { name: "Ceiling Plans", items: ["1ST FLOOR REFLECTED CEILING PLAN"] },
  { name: "Ceiling Plans (Existing and Demo)", closed: true, items: [] },
  {
    name: "3D Views",
    items: [
      "3D", "3D-No Roof", "PERSPECTIVE FRONT 1", "PERSPECTIVE FRONT 1 Large", "PERSPECTIVE FRONT 2", "PERSPECTIVE FRONT 2 Large",
      "PERSPECTIVE REAR 1", "PERSPECTIVE REAR 1 Large", "PERSPECTIVE REAR 2", "PERSPECTIVE REAR 2 Large", "{3D}",
    ],
  },
];

// category, projection, cut (null = not available), color, pattern, material
const categories = [
  ["Structural ...", "1", "4", "Black", "Solid", ""],
  ["Structural ...", "1", "1", "Black", "Solid", ""],
  ["Structural ...", "1", "1", "Black", "Solid", ""],
  ["Structural ...", "1", "1", "Black", "Solid", ""],
  ["Structural ...", "1", "3", "Black", "Solid", "Concret..."],
  ["Structural ...", "1", "3", "Black", "Solid", ""],
  ["Structural ...", "1", "1", "Black", "Solid", ""],
  ["Structural ...", "1", "1", "Black", "Solid", ""],
  ["Structural ...", "1", null, "Black", "Solid", ""],
  ["Structural ...", "1", "1", "Black", "", ""],
  ["Structural ...", "1", null, "RGB 000-", "Dash", ""],
  ["Telephon...", "1", null, "Black", "", ""],
  ["Topograp...", "1", "6", "Black", "Solid", "Grass"],
  ["Walls", "1", "3", "Red", "Solid", "Default"],
  ["Windows", "1", "3", "Black", "Solid", ""],
  ["Wires", "1", null, "Black", "Solid", ""],
];

const swatches = { Black: "#000", Red: "#f00", "RGB 000-": "#008000" };

/* ---------- components ---------- */

const ScrollBar = ({ thumb, below }) => (
  <BarTrack>
    <button aria-label="Scroll up"><Chevron dir="up" /></button>
    <BarThumb $h={thumb} $below={below} />
    <button aria-label="Scroll down"><Chevron /></button>
  </BarTrack>
);

const QuickAccessBar = () => (
  <QuickAccess>
    <Logo>R</Logo>
    {quickAccess.map(([name, w], i) => {
      if (name === "|") return <QuickDivider key={i} />;
      return (
        <QuickButton key={i} $w={w} aria-label={name}>
          {name === "caret" && <Caret color="#444" />}
          {name === "A" && <b>A</b>}
          {quickIcons[name] && <QuickIcon name={name} />}
        </QuickButton>
      );
    })}
    <QuickButton $w={20} aria-label="Customize">
      <svg width="9" height="9" viewBox="0 0 9 9"><path d="M0 1h9M1 4h7L4.5 8z" stroke="#555" fill="#555" /></svg>
    </QuickButton>
  </QuickAccess>
);

const RibbonPanel = () => (
  <Ribbon>
    {ribbonGroups.map((group) => (
      <Group key={group.label} $w={group.w} $last={group.last}>
        <Tools>
          {group.tools.map(([label, icon, w, arrow]) => (
            <Tool key={label} $w={w}>
              <ToolIcon name={icon} />
              <ToolLabel>
                {label.split("\n").map((line) => <div key={line}>{line}</div>)}
              </ToolLabel>
              {arrow === "below" && <Caret />}
              {arrow === "side" && <SideArrow><Caret /></SideArrow>}
            </Tool>
          ))}
        </Tools>
        <GroupLabel $start={group.start}>
          {group.label}
          {group.arrow && <Caret size={8} color="#333" />}
        </GroupLabel>
      </Group>
    ))}
  </Ribbon>
);

const PropertyValue = ({ row, id }) => {
  const [checked, setChecked] = useState(!!row.check);
  if (row.button) return <CellButton>{row.button}</CellButton>;
  if (row.check === undefined) return row.value;
  return (
    <CheckHolder>
      <CheckBox id={id} type="checkbox" checked={checked} onChange={() => setChecked(!checked)} />
      {checked && <svg width="10" height="8" viewBox="0 0 10 8"><path d="M1 4l3 3 5-6" fill="none" stroke="#555" strokeWidth="1.2" /></svg>}
    </CheckHolder>
  );
};

const Properties = () => (
  <>
    <PanelTitle>Properties</PanelTitle>
    <TypeSelector>
      <Thumb>
        <svg width="32" height="32" viewBox="0 0 32 32" stroke="#6d7178" strokeWidth="1.3">
          <path d="M1 3h19v23H1z" fill="#d5dae3" />
          <path d="M20 4h9v9h-9z" fill="#d5dae3" />
          <path d="M12 12h19v15H12z" fill="#f1f3f6" />
          <path d="M20 4v8h-8v14" fill="none" strokeDasharray="2 1" />
        </svg>
      </Thumb>
      <span>Floor Plan</span>
      <Grow />
      <Caret size={8} color="#333" />
    </TypeSelector>
    <InstanceRow>
      <SelectWrap $w={276}>
        <Select $pad={1} $edge="#d0d0d0" $bg="#dedede" aria-label="Instance">
          <option>Floor Plan: 2ND FLOOR PLAN Copy 1</option>
        </Select>
        <Chevron />
      </SelectWrap>
      <EditType>
        <svg width="10" height="10" viewBox="0 0 10 10" fill="none" stroke="#999"><path d="M1 2h4v3H1zM6 1h3v4H6zM1 6h4v3H1zM6 6h3v3H6z" /></svg>
        Edit Type
      </EditType>
    </InstanceRow>
    <PropertyArea>
      <PropertyClip>
        <PropertyTable>
          <colgroup><Col $w={158} /><col /><Col $w={12} /></colgroup>
          <tbody>
            {properties.map((row, i) =>
              row.group ? (
                <tr key={i}><th colSpan="3">{row.group}<DoubleUp /></th></tr>
              ) : (
                <PropertyRow key={i} $dim={row.dim}>
                  <td>{row.check === undefined ? row.name : <label htmlFor={`prop-${i}`}>{row.name}</label>}</td>
                  <td><PropertyValue row={row} id={`prop-${i}`} /></td>
                  <td />
                </PropertyRow>
              )
            )}
          </tbody>
        </PropertyTable>
      </PropertyClip>
      <ScrollBar thumb={283} />
    </PropertyArea>
    <PropertiesFooter>
      <a href="#help">Properties help</a>
      <FooterApply disabled>Apply</FooterApply>
    </PropertiesFooter>
  </>
);

const ProjectBrowser = () => (
  <>
    <PanelTitle>Project Browser - Editied 3.8.19.rvt</PanelTitle>
    <BrowserArea>
      <Tree>
        <TreeRow>
          <Guide $half />
          <svg width="20" height="16" viewBox="0 0 20 16" fill="none" stroke="#666" strokeWidth="1.4">
            <path d="M6 2H3v3M14 2h3v3M6 14H3v-3M14 14h3v-3" />
            <path d="M6 7l2-3h7v6l-2 2H6z" fill="#ddd" />
          </svg>
          <TreeText>Views (Discipline)</TreeText>
        </TreeRow>
        <TreeRow>
          <Guide $blank />
          <Toggle aria-label="Architectural"><PlusMinus /></Toggle>
          <Dash $w={9} $back={5} />
          <TreeText>Architectural</TreeText>
        </TreeRow>
        {views.map((branch) => (
          <React.Fragment key={branch.name}>
            <TreeRow>
              <Guide $blank />
              <Guide />
              <Toggle aria-label={branch.name}><PlusMinus plus={branch.closed} /></Toggle>
              <Dash $w={9} $back={5} />
              <TreeText>{branch.name}</TreeText>
            </TreeRow>
            {branch.items.map((item, i) => (
              <TreeRow key={item}>
                <Guide $blank />
                <Guide />
                <Guide />
                <Guide $half={i === branch.items.length - 1} />
                <Dash $w={14} $back={10} />
                <TreeText $active={item === "2ND FLOOR PLAN Copy 1"}>{item}</TreeText>
              </TreeRow>
            ))}
          </React.Fragment>
        ))}
      </Tree>
      <ScrollBar thumb={245} />
    </BrowserArea>
    <BottomScroll>
      <BottomThumb />
      <Chevron dir="right" size={8} />
    </BottomScroll>
  </>
);

const jamb = (x, y) => <rect key={`${x}-${y}`} x={x - 2} y={y - 1} width="4" height="4" />;

const Sink = ({ x, y, flip }) => (
  <g transform={`translate(${x} ${y}) scale(${flip ? -1 : 1} 1)`}>
    <ellipse rx="16" ry="15" />
    <path d="M7 -10C-4 -15 -12 -10 -12 0S-4 15 7 10Q10 0 7 -10z" />
    <circle r="1.5" />
    <path d="M3 0h9M10 -4v2M10 2v2" strokeWidth="1.6" />
  </g>
);

const Toilet = ({ x, y, flip }) => (
  <g transform={`translate(${x} ${y}) scale(${flip ? -1 : 1} 1)`}>
    <ellipse rx="18" ry="15" />
    <ellipse rx="16" ry="13.5" />
    <path d="M15 -9h3v5h3M15 9h3v-5h3" />
    <rect x="20" y="-15" width="10" height="30" rx="2" />
  </g>
);

const FloorPlan = () => (
  <svg width="860" height="1060" viewBox="1430 260 860 1060" fill="none" stroke="#666" strokeWidth="1">
    <defs>
      <pattern id="brickH" width="4" height="6" patternUnits="userSpaceOnUse" x="1671" y="274">
        <path d="M.5 0v6M0 3h4" stroke="#aaa" strokeWidth="1" />
      </pattern>
      <pattern id="brickV" width="6" height="5" patternUnits="userSpaceOnUse">
        <path d="M0 .5h6" stroke="#999" strokeWidth="1" />
      </pattern>
    </defs>

    {/* floor edge seen from below */}
    <g stroke="#c8c8c8">
      <path d="M1688 636.5H2012.5V962.5H1703M1703 651.5H1960M1995.5 656V817M1873 947H1933" />
      <path d="M1738 636v-2h36v2M1831 636v-2h36v2M1925 636v-2h36v2M1742 652v3h28v-3M1836 652v3h27v-3M1929 652v3h28v-3" />
      <path d="M1687 679V728M1687 684h19v38h-19M1687 773v50M1687 778h19v39h-19M1687 866v50M1687 871h19v40h-19" />
      <path d="M1736 947v-2h40v2M1830 947v-2h42v2M1924 947v-2h39v2M1731 963.5h50M1825 963.5h50M1918 963.5h50" />
      <path d="M1994 683v41M1994 777v41M1994 871v41M2013.5 777v44M2013.5 866v50" />
    </g>

    {/* masonry */}
    <g stroke="#777">
      <path d="M1671 274.5H2271v5H1671z" fill="url(#brickH)" stroke="none" />
      <path d="M1671 1175.5H1870v5H1671zM1870 1296.5H2271v5H1870z" fill="url(#brickH)" stroke="none" />
      <path d="M1688 289h5v395h-5zM1688 757h5v190h-5zM1688 954h5v212h-5zM2267 275h5v1027h-5zM1869 1180h5v121h-5z" fill="url(#brickV)" stroke="none" />
      <path d="M1671 274.5H2271.5V1301.5H1869.5V1180.5H1671M1688.5 289V684M1688.5 757V947M1688.5 954V1166" />
    </g>

    {/* walls */}
    <g stroke="#7a7a7a" strokeWidth="2">
      <path d="M1671 289H1693V684H1437M1437 691H1523V697M1531 697V691H1688V695" />
      <path d="M1708 564H1703V289H1976V564H1951M1983 577V289H2257V640H2237M1976 577V571H1951" />
      <path d="M1769 564H1889M1769 571H1802V577M1811 577V571H1889M1708 571H1703V695H1690" />
      <path d="M1976 636V640H1960V828H1996V947H1933M1983 636V640H2177M1967 663V651H2150M2177 651H2157V774H2257V651H2237" />
      <path d="M1967 722V821H2150V651M1960 722H1967M2157 828V781H2257V947H2163M2157 828H2006V947H2101" />
      <path d="M1803 637V947H1703V757H1693V947H1530V757M1809 637V947H1873M1523 757V954H1693V1165H1671" />
      <path d="M1802 966V957H1703V1165H1803V1028M1809 966V957H1873M1809 1028V1165H1885V1286H2257V957H2163M1933 957H2101" />
    </g>
    <path d="M1703.5 695V757" stroke="#777" />
    <path d="M1671 279.5H2266V1296.5H1875V1175.5H1671" stroke="#333" strokeWidth="1.5" />

    {/* jambs */}
    <g stroke="#555">
      {[
        [1706, 563], [1706, 571], [1770, 563], [1770, 571], [1889, 563], [1889, 571], [1951, 563], [1951, 571],
        [2176, 640], [2176, 650], [2238, 640], [2238, 650], [1872, 946], [1872, 957], [1934, 946], [1934, 957],
        [2100, 946], [2100, 957], [2163, 946], [2163, 957],
      ].map(([x, y]) => jamb(x, y))}
      <path d="M1708.5 565v6M1768.5 565v6M1890.5 565v6M1950.5 565v6M2178.5 641v10M2236.5 641v10M1874.5 947v10M1932.5 947v10M2102.5 947v10M2162.5 947v10" />
      <path d="M1801 573h3v4h6v-4h3M1974 573h3v4h6v-4h3M1801 640v-4h11v4M1975 640v-4h10v4M1801 962v5h11v-5M1801 1031v-5h11v5M1522 693v5h9v-5M1522 761v-4h10v4M1687 759v-4h18v4M1688 692v3h4" />
    </g>

    {/* doors */}
    <g stroke="#6b6b6b">
      <path d="M1709 505h2v59h-2zM1711 505C1738 508 1764 530 1768 563" />
      <path d="M1948 505h2v59h-2zM1948 505C1920 508 1894 530 1891 563" />
      <path d="M1802 577L1761 618L1763 620L1804 578M1761 619C1768 628 1784 635 1803 636" />
      <path d="M1984 633h59v3h-59zM1983 577C2012 580 2038 598 2042 633" />
      <path d="M2234 582h2v58h-2zM2234 582C2204 586 2182 606 2178 640" />
      <path d="M1463 697h60v3h-60zM1464 700C1466 730 1490 755 1524 757" />
      <path d="M1629 695h60v3h-60zM1630 698C1632 728 1654 753 1688 755" />
      <path d="M1808 967L1850 1010M1811 967L1852 1009L1850 1011C1842 1020 1830 1026 1811 1027" />
      <path d="M1930 958h3v59h-3zM1874 958C1877 992 1898 1014 1930 1017" />
      <path d="M2158 958h3v59h-3zM2102 958C2105 992 2127 1014 2158 1017" />
    </g>

    {/* windows */}
    <g fill="#fff" stroke="#555">
      {[1790, 2070].map((x) => (
        <g key={x}>
          <rect x={x + 0.5} y="273.5" width="99" height="19" strokeWidth="1.5" />
          <path d={`M${x - 3} 273.5H${x + 103}`} stroke="#111" strokeWidth="1.5" />
        </g>
      ))}
      {[1928, 2045, 2161].map((x) => (
        <g key={x}>
          <rect x={x + 0.5} y="1283.5" width="51" height="18" />
          <path d={`M${x} 1283.5h52M${x} 1286.5h52M${x - 4} 1302.5h60`} strokeWidth="1.5" />
        </g>
      ))}
    </g>

    {/* stairs */}
    <g stroke="#888">
      <path d="M2014.5 656V728M2032.5 656V728M2050.5 656V728M2068.5 656V728M1995.5 654V656.5H2147.5V817.5H1967M1995 654h155" />
      <path d="M1978.5 744V817M1995.5 744V817M2014.5 744V817M2032.5 744V817M2050.5 744V817M2068.5 744V817" />
      <path d="M1995 728.5H2073.5V744.5H1967M1995 728v3h20" />
      <path d="M1954.5 658V792M1957.5 658V792M1960 658h-6M1960 662h-6M1954 792h3M1954 789h6M1953 727h4" stroke="#666" />
      <path d="M1953 726h3v5h-3z" fill="#222" />
      <path d="M2014 653.5H2149.5V819.5M2014 731.5H2071.5V741.5H1967" stroke="#222" />
    </g>

    {/* bathroom fixtures */}
    <g stroke="#777">
      <path d="M1802 740.5H1761.5V828.5H1802M1800.5 740V828" />
      <Sink x={1780} y={785} />
      <Toilet x={1772} y={858} />
      <path d="M1704 1047.5H1745.5V958M1706.5 958V1047" />
      <Sink x={1726} y={1002} flip />
      <Toilet x={1734} y={1086} flip />
      <path d="M1703 1115.5H1802" />
      <path d="M1712 1118.5H1774Q1797 1119 1797 1140T1774 1161.5H1712Q1707.5 1161 1707.5 1156V1124Q1707.5 1119 1712 1118.5z" />
      <path d="M1713 1120.5H1768Q1787 1122 1787 1140T1768 1159.5H1713Q1709.5 1159 1709.5 1155V1125Q1709.5 1121 1713 1120.5z" />
      <path d="M1704 1138h10v4h-10M1704 1129h3v3h-3M1704 1148h3v3h-3" />
      <circle cx="1715" cy="1140" r="3" fill="#fff" />
    </g>
  </svg>
);

const StylesTable = () => (
  <TableBox>
    <TableArea>
      <StyleTable>
        <colgroup><Col $w={90} /><Col $w={40} /><Col $w={40} /><Col $w={60} /><Col $w={60} /><col /></colgroup>
        <thead>
          <tr>
            <th rowSpan="2">Category</th>
            <th colSpan="2">Line Weight</th>
            <th rowSpan="2">Line Color</th>
            <th rowSpan="2">Line<br />Pattern</th>
            <th rowSpan="2">Material</th>
          </tr>
          <tr><th>Proje...</th><th>Cut</th></tr>
        </thead>
        <tbody>
          {categories.map(([name, projection, cut, color, pattern, material], i) => {
            const selected = name === "Walls";
            const leaf = name === "Telephon...";
            return (
              <StyleRow key={i} $selected={selected}>
                <td>
                  <CategoryCell>
                    {leaf ? <Guide $narrow /> : <Toggle aria-label={`Expand ${name}`}><PlusMinus plus /></Toggle>}
                    <Dash $w={6} $back={0} />
                    <CategoryText $selected={selected}>{name}</CategoryText>
                  </CategoryCell>
                </td>
                <td>{projection}</td>
                <CutCell $off={cut === null}>{cut}</CutCell>
                <td>
                  <ColorCell $selected={selected}><Swatch $color={swatches[color]} />{color}</ColorCell>
                </td>
                <td>{pattern}</td>
                <td>{material}</td>
              </StyleRow>
            );
          })}
        </tbody>
      </StyleTable>
    </TableArea>
    <ScrollBar thumb={60} below />
  </TableBox>
);

const ObjectStyles = () => (
  <DialogBox $front role="dialog" aria-label="Object Styles">
    <DialogTitle>
      Object Styles
      <button aria-label="Close"><Cross w={1.2} /></button>
    </DialogTitle>
    <DialogTabs>
      <DialogTab $active $w={81}>Model Objects</DialogTab>
      <DialogTab $w={99}>Annotation Objects</DialogTab>
      <DialogTab $w={127}>Analytical Model Objects</DialogTab>
      <DialogTab $w={93}>Imported Objects</DialogTab>
    </DialogTabs>
    <DialogPanel>
      <FilterRow>
        <label htmlFor="filter">Filter list:</label>
        <SelectWrap $w={105}>
          <Select id="filter" $pad={3} $edge="#a8a8a8" $bg="#fff"><option>&lt;show all&gt;</option></Select>
          <Chevron />
        </SelectWrap>
      </FilterRow>
      <StylesTable />
      <PanelBottom>
        <ButtonRow>
          <PushButton $w={90}>Select All</PushButton>
          <PushButton $w={90}>Select None</PushButton>
          <PushButton $w={90}>Invert</PushButton>
        </ButtonRow>
        <Subcategories>
          <legend>Modify Subcategories</legend>
          <ButtonRow>
            <PushButton $w={90} $h={23}>New</PushButton>
            <PushButton $w={90} $h={23} disabled>Delete</PushButton>
            <PushButton $w={90} $h={23} disabled>Rename</PushButton>
          </ButtonRow>
        </Subcategories>
      </PanelBottom>
    </DialogPanel>
    <DialogFooter>
      <PushButton $w={75} $primary>OK</PushButton>
      <PushButton $w={75}>Cancel</PushButton>
      <PushButton $w={75}>Apply</PushButton>
      <PushButton $w={75}>Help</PushButton>
    </DialogFooter>
    <Grip><GripDots /></Grip>
  </DialogBox>
);

const VisibilityOverrides = () => (
  <DialogBox role="dialog" aria-label="Visibility/Graphic Overrides">
    <DialogTitle $dim>
      Visibility/Graphic Overrides for Floor Plan: 2ND FLOOR PLAN Copy 1
      <button aria-label="Close"><Cross /></button>
    </DialogTitle>
    <DialogFooter $end>
      <PushButton $w={75}>OK</PushButton>
      <PushButton $w={75}>Cancel</PushButton>
      <PushButton $w={75} disabled>Apply</PushButton>
      <PushButton $w={75}>Help</PushButton>
    </DialogFooter>
    <Grip><GripDots /></Grip>
  </DialogBox>
);

const App = () => (
  <>
    <GlobalStyle />
    <Shell>
      <TitleBar>
        <QuickAccessBar />
        <Title>Autodesk Revit 2019 - Editied 3.8.19.rvt - Floor Plan: 2ND FLOOR PLAN Copy 1</Title>
      </TitleBar>
      <RibbonTabs>
        <FileTab>File</FileTab>
        <RibbonTab $active $w={83}>Architecture</RibbonTab>
        {ribbonTabs.map(([name, w]) => <RibbonTab key={name} $w={w}>{name}</RibbonTab>)}
        <RibbonToggle aria-label="Minimize ribbon">
          <svg width="16" height="10" viewBox="0 0 16 10"><rect x="1" y="1" width="14" height="8" rx="2" fill="#eee" stroke="#777" /><path d="M6 6.5h4L8 3.5z" fill="#444" /></svg>
          <Caret />
        </RibbonToggle>
      </RibbonTabs>
      <RibbonPanel />
      <OptionsBar />
      <Workspace>
        <Sidebar>
          <Properties />
          <ProjectBrowser />
        </Sidebar>
        <Editor>
          <DocTabs>
            {docTabs.map(([name, icon, w]) => <DocTab key={name} $w={w}><DocIcon name={icon} />{name}</DocTab>)}
            <DocTab $active $w={195}>
              <DocIcon name="plan" />2ND FLOOR PLAN Copy 1
              <CloseMark><Cross size={11} w={2} /></CloseMark>
            </DocTab>
          </DocTabs>
          <Canvas>
            <FloorPlan />
            <VisibilityOverrides />
            <ObjectStyles />
          </Canvas>
          <ViewBar>
            <ViewScale>1/4" = 1'-0"</ViewScale>
            {viewIcons.map((art, i) => <ViewButton key={i} aria-label={`View control ${i + 1}`}><ViewIcon art={art} /></ViewButton>)}
            <Chevron dir="left" />
            <HTrack><HThumb /></HTrack>
          </ViewBar>
        </Editor>
      </Workspace>
      <StatusBar>Ready</StatusBar>
    </Shell>
  </>
);

export default App;
